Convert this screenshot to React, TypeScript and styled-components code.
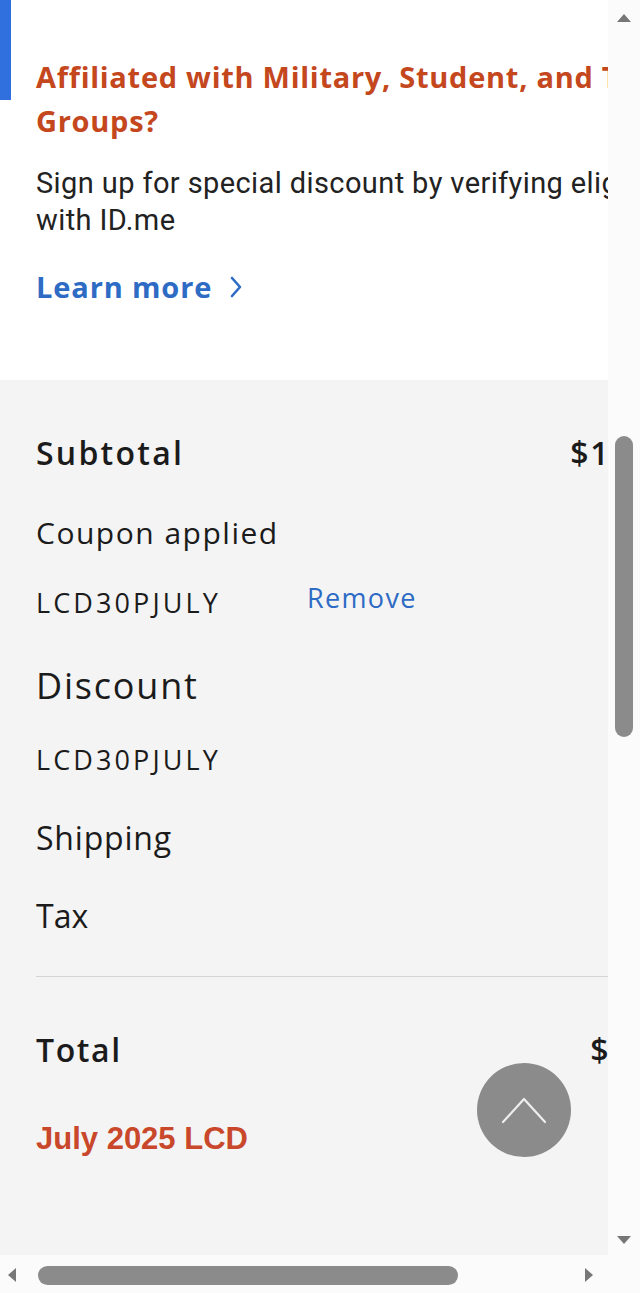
import React from "react";
import styled, { createGlobalStyle } from "styled-components";

const Global = createGlobalStyle`
  html, body { margin: 0; padding: 0; background: #ffffff; }
  body { overflow: hidden; }
  * { box-sizing: border-box; }
`;

const Frame = styled.div`
  width: 640px;
  height: 1293px;
  display: grid;
  grid-template-columns: 608px 32px;
  grid-template-rows: 1255px 38px;
  background: #fbfbfb;
`;

const Viewport = styled.div`
  position: relative;
  overflow: hidden;
  background: #ffffff;
`;

const Page = styled.div`
  width: 740px;
  display: flex;
  flex-direction: column;
  height: 100%;
`;

const PromoSection = styled.section`
  display: flex;
  align-items: flex-start;
  height: 380px;
  background: #ffffff;
`;

const AccentBar = styled.div`
  width: 11px;
  height: 100px;
  flex: none;
  background: #2f6fde;
`;

const PromoBody = styled.div`
  display: flex;
  flex-direction: column;
  padding: 55px 0 0 25px;
`;

const PromoTitle = styled.h2`
  margin: 0;
  font-family: "Open Sans", "Noto Sans", sans-serif;
  font-weight: 700;
  font-size: 29px;
  letter-spacing: 0.025em;
  line-height: 44px;
  color: #c4471d;
  white-space: nowrap;
`;

const PromoText = styled.p`
  margin: 22px 0 0;
  font-family: "Roboto", "Noto Sans", sans-serif;
  font-size: 29px;
  letter-spacing: 0.4px;
  line-height: 37px;
  color: #222222;
  white-space: nowrap;
`;

const LearnMore = styled.a`
  margin-top: 28px;
  display: inline-flex;
  align-items: center;
  gap: 18px;
  font-family: "Open Sans", "Noto Sans", sans-serif;
  font-weight: 700;
  font-size: 29px;
  letter-spacing: 0.03em;
  line-height: 40px;
  color: #2d6bc5;
  text-decoration: none;
`;

const Summary = styled.section`
  flex: 1;
  background: #f4f4f4;
  padding: 53px 40px 0 36px;
  display: flex;
  flex-direction: column;
`;

const Row = styled.div<{ $mt?: number }>`
  display: flex;
  justify-content: space-between;
  align-items: flex-start;
  margin-top: ${(p) => p.$mt ?? 0}px;
`;

const Label = styled.span<{ $size: number; $weight?: number; $spacing?: number }>`
  font-family: "Open Sans", "Noto Sans", sans-serif;
  font-size: ${(p) => p.$size}px;
  font-weight: ${(p) => p.$weight ?? 400};
  letter-spacing: ${(p) => p.$spacing ?? 0.05}em;
  line-height: ${(p) => (p.$size > 33 ? 44 : 40)}px;
  color: #1b1b1b;
  white-space: nowrap;
`;

const Code = styled(Label)`
  min-width: 271px;
`;

const RemoveLink = styled.a`
  font-family: "Open Sans", "Noto Sans", sans-serif;
  font-size: 27px;
  letter-spacing: 0.05em;
  line-height: 30px;
  color: #2d6bc5;
  text-decoration: none;
  margin-right: auto;
`;

const Estimate = styled.span`
  font-family: "Liberation Sans", Arial, sans-serif;
  font-weight: 700;
  font-size: 31px;
  line-height: 40px;
  color: #c9472a;
  white-space: nowrap;
`;

const Divider = styled.hr`
  margin: 40px 0 0;
  border: none;
  border-top: 1px solid #d5d5d5;
  width: 100%;
`;

const ScrollTop = styled.button`
  position: absolute;
  left: 477px;
  top: 1063px;
  width: 94px;
  height: 94px;
  border-radius: 50%;
  border: none;
  background: #8b8b8b;
  display: flex;
  align-items: center;
  justify-content: center;
  padding: 0;
`;

const VBar = styled.div`
  display: flex;
  flex-direction: column;
  align-items: center;
  background: #fbfbfb;
`;

const VThumb = styled.div`
  width: 18px;
  height: 301px;
  margin-top: 414px;
  border-radius: 9px;
  background: #8b8b8b;
`;

const ArrowSpacer = styled.div`
  flex: 1;
`;

const HBar = styled.div`
  display: flex;
  align-items: center;
  background: #fbfbfb;
  padding: 2px 0 0 8px;
`;

const HThumb = styled.div`
  width: 420px;
  height: 19px;
  margin-left: 22px;
  border-radius: 10px;
  background: #8b8b8b;
`;

const Corner = styled.div`
  background: #fbfbfb;
`;

const Tri = ({ dir }: { dir: "up" | "down" | "left" | "right" }) => {
  const pts: Record<string, string> = {
    up: "0,8 7,0 14,8",
    down: "0,0 14,0 7,8",
    left: "8,0 8,14 0,7",
    right: "0,0 8,7 0,14",
  };
  const horiz = dir === "left" || dir === "right";
  return (
    <svg width={horiz ? 8 : 14} height={horiz ? 14 : 8} viewBox={horiz ? "0 0 8 14" : "0 0 14 8"}>
      <polygon points={pts[dir]} fill="#777777" />
    </svg>
  );
};

const UpArrowWrap = styled.div`
  margin-top: 14px;
  display: flex;
`;

const DownArrowWrap = styled.div`
  margin-bottom: 11px;
  display: flex;
`;

const RightArrowWrap = styled.div`
  margin-left: auto;
  margin-right: 15px;
  display: flex;
`;

export default function App() {
  return (
    <>
      <Global />
      <Frame>
        <Viewport>
          <Page>
            <PromoSection>
              <AccentBar />
              <PromoBody>
                <PromoTitle>
                  Affiliated with Military, Student, and Teacher
                  <br />
                  Groups?
                </PromoTitle>
                <PromoText>
                  Sign up for special discount by verifying eligibility
                  <br />
                  with ID.me
                </PromoText>
                <div>
                  <LearnMore href="#">
                    Learn more
                    <svg width="12" height="22" viewBox="0 0 12 22">
                      <polyline points="2,2 10,11 2,20" fill="none" stroke="#2d6bc5" strokeWidth="2.6" strokeLinecap="round" strokeLinejoin="round" />
                    </svg>
                  </LearnMore>
                </div>
              </PromoBody>
            </PromoSection>
            <Summary>
              <Row>
                <Label $size={32} $weight={600} $spacing={0.07}>Subtotal</Label>
                <Label $size={32} $weight={600}>$139.98</Label>
              </Row>
              <Row $mt={40}>
                <Label $size={30}>Coupon applied</Label>
              </Row>
              <Row $mt={30}>
                <Code $size={27} $spacing={0.115}>LCD30PJULY</Code>
                <RemoveLink href="#">Remove</RemoveLink>
              </Row>
              <Row $mt={41}>
                <Label $size={36}>Discount</Label>
              </Row>
              <Row $mt={32}>
                <Label $size={27} $spacing={0.115}>LCD30PJULY</Label>
              </Row>
              <Row $mt={38}>
                <Label $size={32} $spacing={0.025}>Shipping</Label>
              </Row>
              <Row $mt={38}>
                <Label $size={32} $spacing={0}>Tax</Label>
              </Row>
              <Divider />
              <Row $mt={53}>
                <Label $size={32} $weight={600}>Total</Label>
                <Label $size={32} $weight={600}>$97.99</Label>
              </Row>
              <Row $mt={49}>
                <Estimate>July 2025 LCD</Estimate>
              </Row>
            </Summary>
          </Page>
          <ScrollTop aria-label="Back to top">
            <svg width="46" height="27" viewBox="0 0 46 27">
              <polyline points="2,25 23,2 44,25" fill="none" stroke="#eeeeee" strokeWidth="2.2" strokeLinecap="round" strokeLinejoin="round" />
            </svg>
          </ScrollTop>
        </Viewport>
        <VBar>
          <UpArrowWrap>
            <Tri dir="up" />
          </UpArrowWrap>
          <VThumb />
          <ArrowSpacer />
          <DownArrowWrap>
            <Tri dir="down" />
          </DownArrowWrap>
        </VBar>
        <HBar>
          <Tri dir="left" />
          <HThumb />
          <RightArrowWrap>
            <Tri dir="right" />
          </RightArrowWrap>
        </HBar>
        <Corner />
      </Frame>
    </>
  );
}
